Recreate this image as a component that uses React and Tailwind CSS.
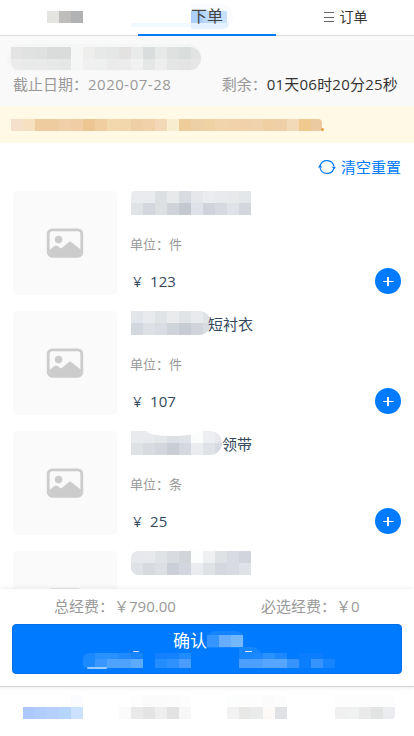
// each string is one row of 12px cells, "-" leaves a cell empty
const Mosaic = ({ rows, className = "" }) => {
  return (
    <div className={`overflow-hidden shrink-0 ${className}`}>
      {rows.map((row, idx) => (
        <div key={idx} className="flex">
          {row.split(" ").map((c, i) => (
            <span
              key={i}
              className="block w-3 h-3 shrink-0"
              style={{ backgroundColor: c === "-" ? "transparent" : `#${c}` }}
            />
          ))}
        </div>
      ))}
    </div>
  );
};

const ImageIcon = () => (
  <svg width="38" height="30" viewBox="0 0 38 30" className="block -mt-px">
    <rect x="2.2" y="1.800" width="33.600" height="26.5" rx="4" fill="none" stroke="#cccccc" strokeWidth="2.8" />
    <circle cx="12.6" cy="11.600" r="3.8" fill="#cccccc" />
    <path d="M2 23 L8.500 18 Q10 17 11.500 18 L15 20.500 L22.500 14.200 Q24 13 25.500 14.200 L36 22.500 V25 Q36 28.500 32 28.500 H6 Q2 28.500 2 25 Z" fill="#cccccc" />
  </svg>
);

const ResetIcon = () => (
  <svg width="18" height="18" viewBox="0 0 18 18" fill="none" stroke="#007aff" strokeWidth="1.1" className="block">
    <path d="M2.100 8 A7.100 7.100 0 0 1 16 8.500" />
    <path d="M15.900 10 A7.100 7.100 0 0 1 2 9.500" />
    <path d="M0 9.400 L2 6.600 L4.200 9.400 Z M13.800 8.700 H18 L16 11.400 Z" fill="#007aff" stroke="none" />
  </svg>
);

const items = [
  {
    rows: ["e9ebef e9ebef dce0e3 e7e9eb d8dce1 e5e7eb ebecf0 e8eaed e7e9eb e3e7ea", "dfe3e6 d4d7de dce0e3 d0d3da c4c8cf dfe2e8 d0d3dc d6d9df dfe2e8 d3d7dd"],
    shape: "w-[120px] rounded-tl-[4px]",
    unit: "件",
    price: 123,
  },
  {
    rows: ["e2e5e9 e8eaed e1e4e7 e9ebed e1e4e7 e8eaed e0e3e6", "d3d7de dde0e4 d9dce2 cfd3da c7cbd3 d1d5db d9dce1"],
    shape: "rounded-r-xl w-[80px]",
    name: "短衬衣",
    unit: "件",
    price: 107,
  },
  {
    rows: ["e8eaee e8eaee e4e7ea dce0e4 dfe2e6 fbfcfc edeef1 e8e9ed", "dfe2e5 d8dbe0 d3d6dd c9cdd4 d5d8df ebecef dfe2e6 d8dae1"],
    shape: "rounded-r-xl w-[91px] mr-[3px]",
    name: "领带",
    unit: "条",
    price: 25,
    dip: true,
  },
  {
    rows: ["e7e8ed e7e9ec dfe3e6 d8dbe0 d1d5da fcfdfd edeff1 dfe2e5 d8dbe1 d1d4da", "dfe2e6 d7dbdf dce0e4 cbcfd8 d3d6de ebecef dfe2e5 d5d9df d8dbe1 dfe2e6"],
    shape: "w-[120px] rounded-l-[7px]",
    unit: "件",
    price: 30,
  },
];

const Item = ({ item }) => (
  <div className="flex h-[104px] shrink-0">
    <div className="w-[104px] h-[104px] rounded bg-[#fafafa] flex items-center justify-center shrink-0">
      <ImageIcon />
    </div>
    <div className="flex-1 pl-[14px] flex flex-col">
      <div className="relative flex h-6 items-start text-[15px] leading-[26px] text-[#34495e]">
        <Mosaic rows={item.rows} className={item.shape} />
        {item.dip && <span className="absolute left-4 -top-1 w-[50px] h-[9px] rounded-[50%] bg-white" />}
        <span className="-ml-[3px]">{item.name}</span>
      </div>
      <div className="mt-[18px] h-[22px] -ml-px text-[13px] leading-[22px] text-[#999999]">单位：{item.unit}</div>
      <div className="mt-[13px] flex items-center justify-between h-[26px]">
        <div className="flex text-[15px] text-[#34495e]">
          <span className="w-[19px] pl-[2px]">¥</span>
          <span className="tracking-[0.1px]">{item.price}</span>
        </div>
        <button className="w-[26px] h-[26px] rounded-full bg-[#007aff] flex items-center justify-center">
          <svg width="12" height="12" viewBox="0 0 12 12">
            <path d="M1 6.500 H11.500" stroke="#fff" strokeWidth="1" />
            <path d="M6 2 V11" stroke="#fff" strokeWidth="2" />
          </svg>
        </button>
      </div>
    </div>
  </div>
);

const App = () => {
  return (
    <div className="w-[414px] h-[736px] bg-white overflow-hidden flex flex-col font-['Open_Sans','Noto_Sans_CJK_SC',sans-serif]">
      <div className="h-9 grid grid-cols-3 shrink-0">
        <div className="border-b border-[#dcdcdc] pl-[47px] pt-[11px]">
          <Mosaic rows={["e4e5e0 bfbdbc b0b2b4"]} />
        </div>
        <div className="border-b-2 border-[#007aff] flex justify-center text-base leading-[33px] text-[#444444]">
          <div className="relative">
            <div className="absolute left-0 top-1 w-[42px] h-[25px] rounded-r-full bg-[#f9fbff]" />
            <div className="absolute left-0 top-[23px] w-[38px] h-[6px] rounded-br-full bg-[#e6f1ff]" />
            <Mosaic rows={["acd0fb b9d8fb c8e1fd"]} className="absolute left-0 top-[11px]" />
            <div className="absolute -left-[60px] top-[23px] w-[60px] h-1 rounded-tr-full bg-[#f2f8ff]" />
            <span className="relative">下单</span>
          </div>
        </div>
        <div className="border-b border-[#dcdcdc] flex justify-center items-center text-sm text-[#333333] pb-px">
          <svg width="12" height="12" viewBox="0 0 12 12" className="mr-[5px]" stroke="#666666">
            <path d="M1 1.500 H11 M1 6.500 H11 M1 10.500 H11" />
          </svg>
          订单
        </div>
      </div>

      <div className="h-[70px] bg-[#f9f9f9] shrink-0 text-[15px]">
        <div className="pl-[7px] pt-2">
          <div className="w-[195px] h-[27px] rounded-2xl bg-[#f5f6f6] pl-1 pt-[3px]">
            <Mosaic
              className="w-[190px] h-[23px] rounded-r-xl rounded-bl-lg"
              rows={[
                "e3e3e3 e0e1e1 dfe0e0 dadcdc dadcdc f5f6f6 eeeeed e7e9e9 e5e6e6 e3e2e1 e9eaea dadddd e7e8e8 dfe1e1 d9dddc e2e3e3",
                "ebebeb e8e9e9 eaeaea e7e8e8 e5e6e6 f5f6f6 f0f0f0 eeefef ebebeb ececec f1f1f1 e5e7e7 eeeeee e4e5e5 e4e4e4 e6e6e7",
              ]}
            />
          </div>
        </div>
        <div className="flex justify-between pl-[13px] pr-[16px] mt-[2px] leading-[22px] text-[#999999]">
          <div>截止日期：<span className="tracking-[0.5px]">2020-07-28</span></div>
          <div>
            剩余：<span className="text-[#333333] tracking-[0.22px]">01天06时20分25秒</span>
          </div>
        </div>
      </div>

      <div className="h-[37px] bg-[#fff9e6] shrink-0 pl-[11px] pt-[13px] flex">
        <Mosaic
          className="w-[311px] h-3 rounded-tr-sm"
          rows={["f5e1cb f5e1c0 efcca0 efcca0 f0cfa9 f0cda5 edc693 f0cea0 f3d8ae f2d6ac efd0a6 f0d1aa f3d8b8 f9edcf efcc9c eed0a6 efd2a3 f2d4ac f1d2aa f0d1a9 f0d3ad f0cfa2 eecfa7 f2d9b8 efc98e ebcaa2"]}
        />
        <span className="w-[3px] h-[3px] mt-[9px] -ml-px rounded-full bg-[#e9a23b]" />
      </div>

      <div className="flex justify-end items-center h-12 shrink-0 pr-[13px] text-[15px] text-[#007aff]">
        <ResetIcon />
        <span className="ml-[5px]">清空重置</span>
      </div>

      <div className="flex flex-col gap-4 px-[13px] h-[398px] overflow-hidden shrink-0">
        {items.map((item, idx) => (
          <Item key={idx} item={item} />
        ))}
      </div>

      <div className="h-[97px] shrink-0 relative bg-white px-3 border-b border-[#d3d3d3] box-content shadow-[0_0_5px_rgba(0,0,0,0.1)] -mb-px">
        <div className="grid grid-cols-2 h-[35px] text-[15px] leading-[34px] text-[#999999]">
          <div className="pl-[42px]">总经费：￥790.00</div>
          <div className="pl-[54px]">必选经费：￥0</div>
        </div>
        <button className="block w-full h-[50px] rounded bg-[#007aff] border border-[#006ee6] text-white text-left overflow-hidden">
          <div className="h-12">
            <div className="flex h-6 pl-[160px] text-[17px] leading-[32px]">
              <span>确认</span>
              <div className="relative mt-[10px]">
                <span className="absolute left-0 -top-1 w-[37px] h-[17px] rounded-r-lg rounded-tl-lg bg-[#1485ff]" />
                <span className="absolute left-8 top-3 w-[24px] h-[12px] rounded-tr-xl bg-[#1686ff]" />
                <Mosaic rows={["3495ff 66adff 73b7ff"]} className="relative" />
              </div>
            </div>
            <div className="pl-[70px] pt-1 relative">
              <Mosaic
                className="rounded-tl-md"
                rows={[
                  "1a88ff 2990ff 2990ff 208aff 1683ff - 1280ff 1482ff 208bff - - - - 1686ff 1b88ff 2990ff 1b88ff - 0a7eff 0a7eff -",
                ]}
              />
              <div className="-mt-1.5">
                <Mosaic
                  className="h-[9px] rounded-bl"
                  rows={["1d89ff 3997ff 50a2ff 50a2ff 5cabff - 238dff 2e91ff 4a9dff - - - - 4c9fff 4c9fff 57a5ff 57a5ff 3794ff 0a7eff 3794ff 1683ff"]}
                />
              </div>
              {/* light edges of the covered line */}
              <span className="absolute left-[74px] top-[18px] w-5 h-[2px] rounded-full bg-[#9bccff]" />
              <span className="absolute left-[120px] top-[2px] w-[6px] h-px bg-[#b9dbff]" />
              <span className="absolute left-[232px] top-[2px] w-[7px] h-px bg-[#d5eaff]" />
            </div>
          </div>
        </button>
      </div>

      <div className="h-[50px] shrink-0 flex pl-[23px] pt-2 mt-px">
        <Mosaic rows={["- - - - fafcff", "acc8ff b1cdff b5d0ff b5d5ff cce0ff"]} className="rounded-l-sm" />
        <Mosaic rows={["- fdfdfd fbfbfb fbfbfb fcfcfc fdfdfd", "fafafa e9e9e9 e4e4e4 eeeeee e2e2e2 f6f7f6"]} className="ml-9" />
        <Mosaic rows={["fcfdfd fdfdfd fdfdfd fbfbfb fdfdfd", "f2f2f2 e8e8e7 e9ecea fcf9f7 e0e1e4"]} className="ml-9" />
        <Mosaic rows={["fdfdfd fdfdfd fdfdfd fdfdfd fdfdfd", "f0f0f0 f0f1f1 eaeaea e1e4e3 ebecef"]} className="ml-12 h-6 rounded-br" />
      </div>
    </div>
  );
};

export default App;
